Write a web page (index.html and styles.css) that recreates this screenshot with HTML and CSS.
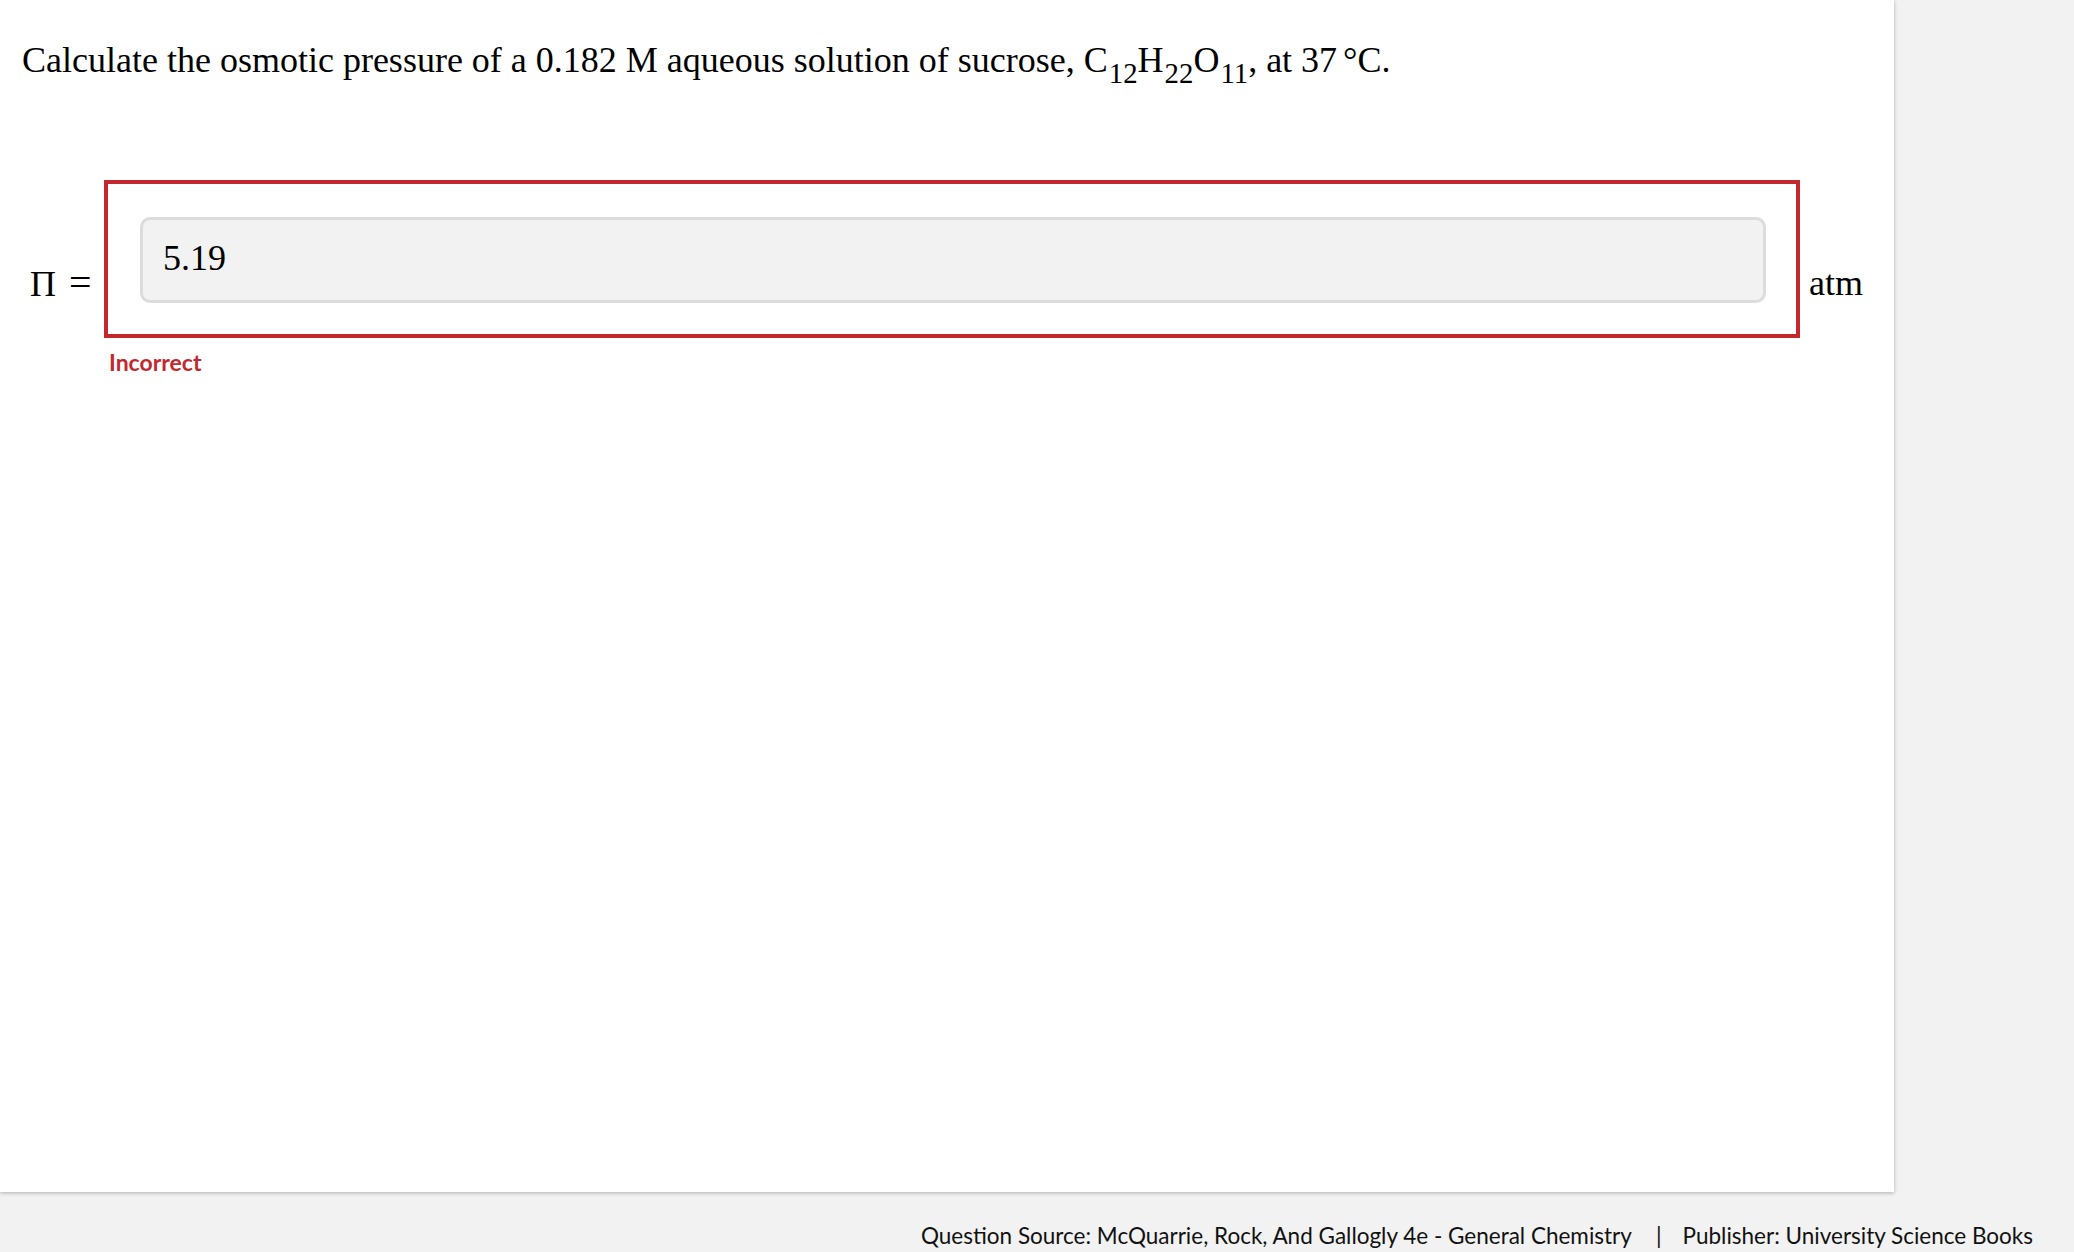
FILE: index.html
```html
<!DOCTYPE html>
<html lang="en">
<head>
<meta charset="utf-8">
<title>Osmotic pressure question</title>
<link rel="stylesheet" href="styles.css">
</head>
<body>
<div class="panel">
  <p class="question">Calculate the osmotic pressure of a 0.182&nbsp;M aqueous solution of sucrose, C<sub>12</sub>H<sub>22</sub>O<sub>11</sub>, at 37<span class="deg">°C.</span></p>
  <div class="answer-row">
    <div class="label"><span class="pi">Π</span><span class="eq">=</span></div>
    <div class="answer-col">
      <div class="answer-box">
        <div class="answer-input">5.19</div>
      </div>
      <div class="feedback">Incorrect</div>
    </div>
    <div class="unit">atm</div>
  </div>
</div>
<div class="footer">Question Source: McQuarrie, Rock, And Gallogly 4e - General Chemistry<span class="sep">|</span>Publisher: University Science Books</div>
</body>
</html>
```

FILE: styles.css
```css
html, body {
  margin: 0;
  padding: 0;
}
body {
  background: #f2f2f2;
  width: 2074px;
  height: 1252px;
  overflow: hidden;
}
.panel {
  box-sizing: border-box;
  width: 1894px;
  height: 1192px;
  background: #ffffff;
  box-shadow: 0 1px 4px rgba(0, 0, 0, 0.28);
  padding: 42px 0 0 22px;
  font-family: "Liberation Serif", "Times New Roman", serif;
  color: #000;
}
.question {
  margin: 0;
  font-size: 36px;
  line-height: 36px;
  white-space: nowrap;
}
.question sub {
  font-size: 80%;
  line-height: 0;
  vertical-align: -0.38em;
  margin-left: 1px;
}
.deg {
  margin-left: 6px;
}
.answer-row {
  display: flex;
  align-items: flex-start;
  margin-top: 102px;
}
.label {
  display: flex;
  align-items: baseline;
  width: 82px;
  padding-left: 8px;
  box-sizing: border-box;
  margin-top: 85px;
  font-size: 36px;
  line-height: 36px;
}
.eq {
  margin-left: 13px;
  font-size: 40px;
}
.answer-col {
  display: flex;
  flex-direction: column;
}
.answer-box {
  box-sizing: border-box;
  width: 1696px;
  height: 158px;
  border: 4px solid #c1292e;
  padding: 33px 30px 0 32px;
}
.answer-input {
  box-sizing: border-box;
  height: 86px;
  border: 3px solid #dcdcdc;
  border-radius: 10px;
  background: #f2f2f2;
  padding: 0 0 4px 20px;
  font-size: 36px;
  line-height: 76px;
}
.feedback {
  margin-top: 11px;
  padding-left: 5px;
  font-family: Lato, "Liberation Sans", sans-serif;
  font-weight: bold;
  font-size: 23px;
  line-height: 26px;
  color: #c1292e;
}
.unit {
  margin-left: 9px;
  margin-top: 85px;
  font-size: 36px;
  line-height: 36px;
}
.footer {
  box-sizing: border-box;
  height: 60px;
  padding: 31px 41px 0 0;
  text-align: right;
  font-family: Lato, "Liberation Sans", sans-serif;
  font-size: 22.5px;
  line-height: 26px;
  color: #111;
  white-space: nowrap;
}
.sep {
  margin: 0 21px 0 24px;
}
```
